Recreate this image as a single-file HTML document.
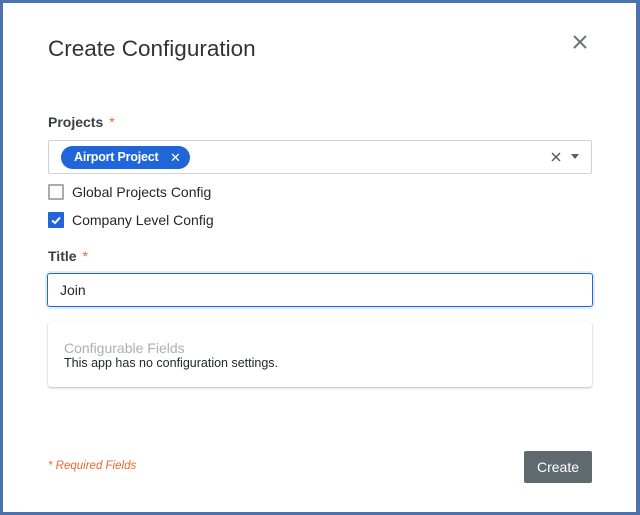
<!DOCTYPE html>
<html><head><style>
*{box-sizing:border-box;margin:0;padding:0}
html,body{width:640px;height:515px;overflow:hidden;background:#fff;font-family:"Liberation Sans",sans-serif;color:#232729}
.frame{position:absolute;left:0;top:0;width:640px;height:515px;border:3px solid #4c72ad;border-right-width:4px}
.a{position:absolute}
.lbl{font-size:14px;font-weight:bold;color:#393e41}
.star{color:#f0642d;font-weight:normal;margin-left:6px}
.cb{width:16px;height:16px;border:2px solid #a6aeb2;border-radius:1px}
.cbt{font-size:14px;color:#232729}
</style></head><body>
<div class="frame"></div>
<div class="a" style="left:48px;top:36px;font-size:22.5px;color:#333">Create Configuration</div>
<svg class="a" style="left:573px;top:35px" width="14" height="14" viewBox="0 0 14 14"><path d="M1 1L13 13M13 1L1 13" stroke="#6a767c" stroke-width="2"/></svg>
<div class="a lbl" style="left:48px;top:114px">Projects<span class="star">*</span></div>
<div class="a" style="left:48px;top:140px;width:544px;height:34px;border:1px solid #cfd3d6;border-radius:2px"></div>
<div class="a" style="left:61px;top:146px;width:129px;height:23px;background:#2166d9;border-radius:12px;color:#fff;font-size:12.5px;font-weight:bold;line-height:23px;padding-left:13px;letter-spacing:-0.2px">Airport Project<span style="position:absolute;left:109px;top:0;font-weight:normal;font-size:13px">✕</span></div>
<svg class="a" style="left:551px;top:152px" width="10" height="10" viewBox="0 0 10 10"><path d="M1 1L9 9M9 1L1 9" stroke="#555f64" stroke-width="1.5"/></svg>
<svg class="a" style="left:570px;top:154px" width="10" height="6" viewBox="0 0 10 6"><path d="M1 0H9L5 5Z" fill="#555f64"/></svg>
<div class="a cb" style="left:48px;top:184px"></div>
<div class="a cbt" style="left:72px;top:184px">Global Projects Config</div>
<div class="a" style="left:48px;top:212px;width:16px;height:16px;background:#2166d9;border-radius:1px"><svg width="16" height="16" viewBox="0 0 16 16"><path d="M4 8.5L7 11L12 5.5" stroke="#fff" stroke-width="2" fill="none"/></svg></div>
<div class="a cbt" style="left:72px;top:212px">Company Level Config</div>
<div class="a lbl" style="left:48px;top:248px">Title<span class="star">*</span></div>
<div class="a" style="left:47px;top:273px;width:546px;height:34px;border:1px solid #2166d9;border-radius:3px;box-shadow:0 0 0 2px #e3ecf9;font-size:14px;line-height:32px;padding-left:12px">Join</div>
<div class="a" style="left:48px;top:322px;width:544px;height:65px;background:#fff;box-shadow:0 1px 2px rgba(0,0,0,.25),0 0 1px rgba(0,0,0,.1);border-radius:3px"></div>
<div class="a" style="left:64px;top:340px;font-size:14px;color:#a9b0b4">Configurable Fields</div>
<div class="a" style="left:64px;top:356px;font-size:12.5px;color:#232729">This app has no configuration settings.</div>
<div class="a" style="left:48px;top:460px;font-size:11.5px;font-style:italic;color:#f0642d">* Required Fields</div>
<div class="a" style="left:524px;top:451px;width:68px;height:32px;background:#5f6a6f;border-radius:2px;color:#fff;font-size:14px;line-height:32px;text-align:center">Create</div>
</body></html>
